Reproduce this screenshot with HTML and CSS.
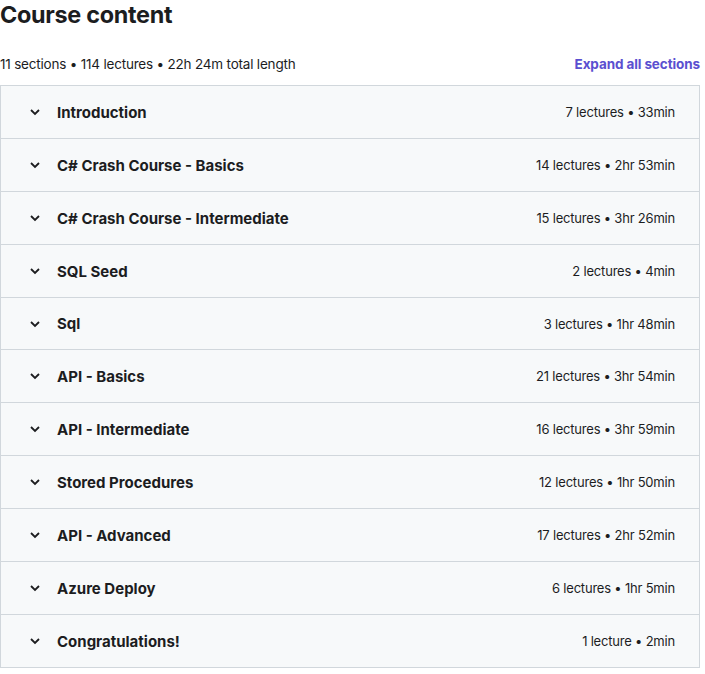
FILE: index.html
```html
<!DOCTYPE html>
<html>
<head>
<meta charset="utf-8">
<link rel="stylesheet" href="styles.css">
</head>
<body>
<div class="page">
  <h2 class="title">Course content</h2>
  <div class="meta">
    <span class="stats">11 sections • 114 lectures • 22h 24m total length</span>
    <span class="expand">Expand all sections</span>
  </div>
  <div class="sections">
    <div class="row"><span class="chev"><svg width="12" height="8" viewBox="0 0 12 8"><path d="M2 2l4 4 4-4" fill="none" stroke="#1c1d1f" stroke-width="1.8"/></svg></span><span class="name">Introduction</span><span class="info">7 lectures • 33min</span></div>
    <div class="row"><span class="chev"><svg width="12" height="8" viewBox="0 0 12 8"><path d="M2 2l4 4 4-4" fill="none" stroke="#1c1d1f" stroke-width="1.8"/></svg></span><span class="name">C# Crash Course - Basics</span><span class="info">14 lectures • 2hr 53min</span></div>
    <div class="row"><span class="chev"><svg width="12" height="8" viewBox="0 0 12 8"><path d="M2 2l4 4 4-4" fill="none" stroke="#1c1d1f" stroke-width="1.8"/></svg></span><span class="name">C# Crash Course - Intermediate</span><span class="info">15 lectures • 3hr 26min</span></div>
    <div class="row"><span class="chev"><svg width="12" height="8" viewBox="0 0 12 8"><path d="M2 2l4 4 4-4" fill="none" stroke="#1c1d1f" stroke-width="1.8"/></svg></span><span class="name">SQL Seed</span><span class="info">2 lectures • 4min</span></div>
    <div class="row short"><span class="chev"><svg width="12" height="8" viewBox="0 0 12 8"><path d="M2 2l4 4 4-4" fill="none" stroke="#1c1d1f" stroke-width="1.8"/></svg></span><span class="name">Sql</span><span class="info">3 lectures • 1hr 48min</span></div>
    <div class="row"><span class="chev"><svg width="12" height="8" viewBox="0 0 12 8"><path d="M2 2l4 4 4-4" fill="none" stroke="#1c1d1f" stroke-width="1.8"/></svg></span><span class="name">API - Basics</span><span class="info">21 lectures • 3hr 54min</span></div>
    <div class="row"><span class="chev"><svg width="12" height="8" viewBox="0 0 12 8"><path d="M2 2l4 4 4-4" fill="none" stroke="#1c1d1f" stroke-width="1.8"/></svg></span><span class="name">API - Intermediate</span><span class="info">16 lectures • 3hr 59min</span></div>
    <div class="row"><span class="chev"><svg width="12" height="8" viewBox="0 0 12 8"><path d="M2 2l4 4 4-4" fill="none" stroke="#1c1d1f" stroke-width="1.8"/></svg></span><span class="name">Stored Procedures</span><span class="info">12 lectures • 1hr 50min</span></div>
    <div class="row"><span class="chev"><svg width="12" height="8" viewBox="0 0 12 8"><path d="M2 2l4 4 4-4" fill="none" stroke="#1c1d1f" stroke-width="1.8"/></svg></span><span class="name">API - Advanced</span><span class="info">17 lectures • 2hr 52min</span></div>
    <div class="row"><span class="chev"><svg width="12" height="8" viewBox="0 0 12 8"><path d="M2 2l4 4 4-4" fill="none" stroke="#1c1d1f" stroke-width="1.8"/></svg></span><span class="name">Azure Deploy</span><span class="info">6 lectures • 1hr 5min</span></div>
    <div class="row"><span class="chev"><svg width="12" height="8" viewBox="0 0 12 8"><path d="M2 2l4 4 4-4" fill="none" stroke="#1c1d1f" stroke-width="1.8"/></svg></span><span class="name">Congratulations!</span><span class="info">1 lecture • 2min</span></div>
  </div>
</div>
</body>
</html>
```
FILE: styles.css
```css
html, body {
  margin: 0;
  padding: 0;
  background: #ffffff;
}
body {
  font-family: Inter, "Noto Sans", "Liberation Sans", sans-serif;
  color: #1c1d1f;
}
.page {
  width: 700px;
}
.title {
  margin: 0;
  font-size: 23.4px;
  line-height: 30px;
  font-weight: 700;
  letter-spacing: -0.3px;
}
.meta {
  display: flex;
  justify-content: space-between;
  align-items: center;
  height: 20px;
  margin-top: 24px;
  margin-bottom: 11px;
  font-size: 13.5px;
}
.stats {
  letter-spacing: -0.2px;
}
.expand {
  color: #5a4fd0;
  font-weight: 700;
  font-size: 13.5px;
  letter-spacing: -0.1px;
}
.sections {
  border: 1px solid #d1d7dc;
  border-bottom: none;
}
.row {
  display: flex;
  align-items: center;
  height: 52px;
  background: #f7f9fa;
  border-bottom: 1px solid #d1d7dc;
  padding: 0 24px 0 28px;
}
.row.short {
  height: 51px;
}
.chev {
  display: flex;
  width: 12px;
  margin-right: 16px;
}
.name {
  font-weight: 700;
  font-size: 15px;
  letter-spacing: 0;
  flex: 1;
}
.info {
  font-size: 13px;
  letter-spacing: -0.2px;
}
```
